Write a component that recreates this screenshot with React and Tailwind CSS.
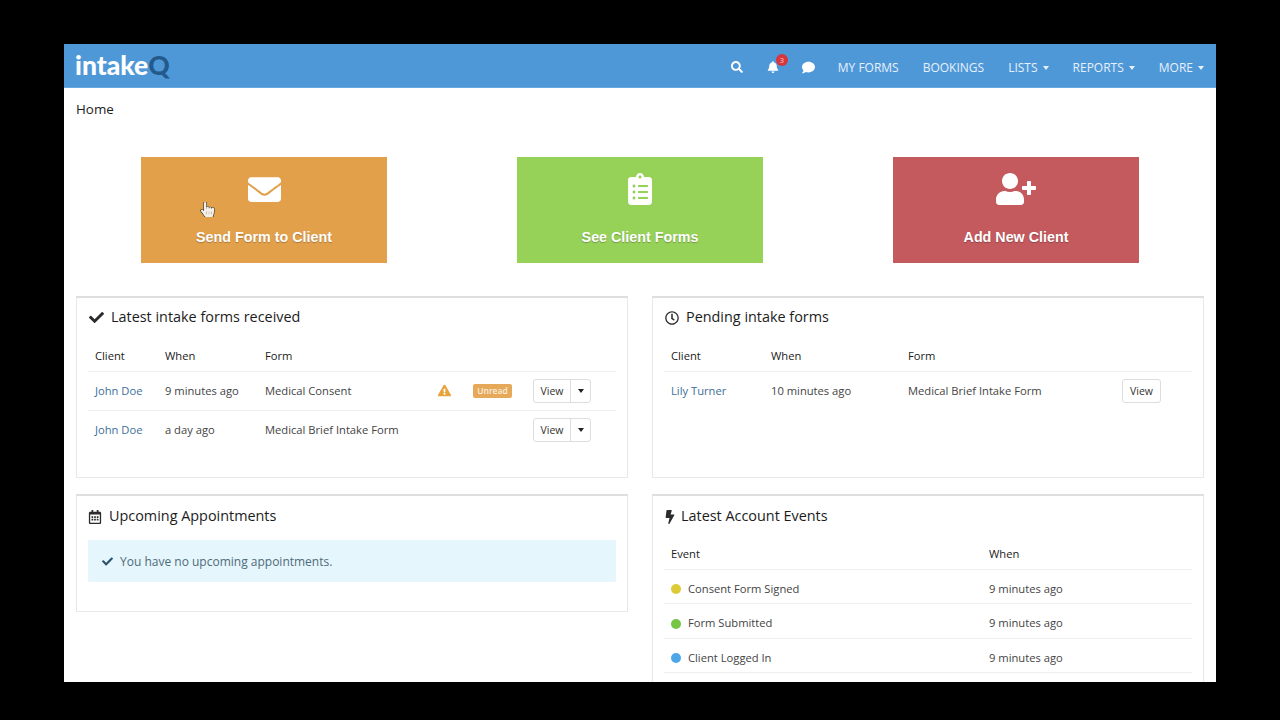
import React from "react";
import {
  FaSearch,
  FaBell,
  FaComment,
  FaEnvelope,
  FaClipboardList,
  FaUserPlus,
  FaCheck,
  FaRegClock,
  FaRegCalendarAlt,
  FaBolt,
  FaExclamationTriangle,
  FaHandPointer,
} from "react-icons/fa";

const Caret = ({ className = "" }) => (
  <span
    className={`inline-block w-0 h-0 border-x-[3.5px] border-x-transparent border-t-[4px] ${className}`}
  />
);

const NavLink = ({ label, caret }) => (
  <span className="flex items-center gap-[5px] pt-px text-[12px] text-[#e6f0fa]">
    {label}
    {caret && <Caret className="border-t-[#e6f0fa]" />}
  </span>
);

const HeroCard = ({ icon, label, color }) => (
  <div
    className={`w-[246px] h-[106px] flex flex-col items-center pt-[14px] ${color}`}
  >
    <div className="h-[36px] flex items-center justify-center text-white">
      {icon}
    </div>
    <p className="mt-[20px] font-['Liberation_Sans',sans-serif] font-bold text-[14.3px] leading-[20px] text-white [text-shadow:0_1px_1px_rgba(0,0,0,0.25)]">
      {label}
    </p>
  </div>
);

const Panel = ({ icon, title, className = "", headClass = "gap-[7px]", children }) => (
  <div
    className={`w-[552px] border border-[#e8e8e8] border-t-2 border-t-[#dedede] px-[11px] ${className}`}
  >
    <div className={`flex items-center h-[41px] text-[14.4px] font-normal text-[#1c1c1c] ${headClass}`}>
      {icon}
      <h2 className="leading-none">{title}</h2>
    </div>
    {children}
  </div>
);

const ViewSplit = () => (
  <div className="flex w-[58px] h-[24px] border border-[#dddddd] rounded-[3px] text-[10.5px] text-[#333]">
    <span className="w-[37px] pt-[2px] flex items-center justify-center border-r border-[#dddddd]">
      View
    </span>
    <span className="flex-1 flex items-center justify-center">
      <Caret className="border-t-[#222]" />
    </span>
  </div>
);

const HeadCell = ({ className = "", children }) => (
  <th className={`px-[7px] pt-[4px] text-left font-normal text-[11.2px] text-[#1c1c1c] ${className}`}>
    {children}
  </th>
);

const Cell = ({ className = "", color = "text-[#444]", children }) => (
  <td className={`px-[7px] pt-[2px] text-[11.2px] ${color} ${className}`}>{children}</td>
);

const events = [
  { name: "Consent Form Signed", dot: "bg-[#dccb36]" },
  { name: "Form Submitted", dot: "bg-[#77c545]" },
  { name: "Client Logged In", dot: "bg-[#4ea6e8]" },
];

const App = () => {
  return (
    <div className="w-[1280px] h-[720px] bg-black pt-[44px] overflow-hidden font-['Open_Sans',sans-serif]">
      <div className="relative mx-auto w-[1152px] h-[638px] bg-white overflow-hidden">
        {/* Top nav */}
        <nav className="h-[44px] bg-[#4f98d8] border-b border-[#6aa9e0] flex items-center pl-[12px] pr-[12px]">
          <div className="-ml-px font-['Lato',sans-serif] font-black text-[26.5px] leading-none text-white">
            intake<span className="text-[#24598c]">Q</span>
          </div>
          <div className="ml-auto pt-[3px] flex items-center">
            <FaSearch className="text-white text-[12px]" />
            <span className="relative ml-[24px] text-white">
              <FaBell className="text-[12px]" />
              <span className="absolute -top-[7px] left-[9px] w-[12px] h-[12px] rounded-full bg-[#d8343c] text-[8px] leading-[12px] text-center text-[#f6c9c9]">
                3
              </span>
            </span>
            <FaComment className="ml-[23px] text-white text-[13px]" />
            <div className="ml-[23px] flex items-center gap-[24px]">
              <NavLink label="MY FORMS" />
              <NavLink label="BOOKINGS" />
              <NavLink label="LISTS" caret />
              <NavLink label="REPORTS" caret />
              <NavLink label="MORE" caret />
            </div>
          </div>
        </nav>

        <div className="px-[12px]">
          <h1 className="mt-[11px] text-[13.4px] leading-[20px] text-[#1c1c1c]">Home</h1>

          {/* Action cards */}
          <div className="mt-[38px] pl-[65px] flex gap-[130px]">
            <HeroCard
              color="bg-[#e3a04a]"
              label="Send Form to Client"
              icon={<FaEnvelope className="text-[33px]" />}
            />
            <HeroCard
              color="bg-[#96d158]"
              label="See Client Forms"
              icon={<FaClipboardList className="text-[32px]" />}
            />
            <HeroCard
              color="bg-[#c4595e]"
              label="Add New Client"
              icon={<FaUserPlus className="text-[40px]" />}
            />
          </div>

          <div className="mt-[33px] grid grid-cols-[552px_552px] gap-x-[24px] gap-y-[16px]">
            <Panel
              title="Latest intake forms received"
              className="h-[182px]"
              headClass="gap-[7px] pb-[2px]"
              icon={<FaCheck className="text-[15px] text-[#2b2b2b] ml-[1px]" />}
            >
              <table className="w-[528px] table-fixed">
                <thead>
                  <tr className="h-[32px] border-b border-[#eeeeee]">
                    <HeadCell className="w-[70px]">Client</HeadCell>
                    <HeadCell className="w-[100px]">When</HeadCell>
                    <HeadCell>Form</HeadCell>
                    <HeadCell className="w-[35px]" />
                    <HeadCell className="w-[60px]" />
                    <HeadCell className="w-[90px]" />
                  </tr>
                </thead>
                <tbody>
                  <tr className="h-[39px] border-b border-[#eeeeee]">
                    <Cell color="text-[#3d6f99]">John Doe</Cell>
                    <Cell>9 minutes ago</Cell>
                    <Cell>Medical Consent</Cell>
                    <Cell className="!pt-0">
                      <FaExclamationTriangle className="text-[13px] text-[#e7a33c]" />
                    </Cell>
                    <Cell className="!pt-0">
                      <span className="block w-[39px] h-[14px] rounded-[2px] bg-[#e6a95a] text-[8.5px] leading-[14px] text-center text-[#fbeedd] font-semibold">
                        Unread
                      </span>
                    </Cell>
                    <Cell className="!pt-0">
                      <ViewSplit />
                    </Cell>
                  </tr>
                  <tr className="h-[39px]">
                    <Cell color="text-[#3d6f99]">John Doe</Cell>
                    <Cell>a day ago</Cell>
                    <Cell className="whitespace-nowrap">Medical Brief Intake Form</Cell>
                    <Cell />
                    <Cell />
                    <Cell className="!pt-0">
                      <ViewSplit />
                    </Cell>
                  </tr>
                </tbody>
              </table>
            </Panel>

            <Panel
              title="Pending intake forms"
              className="h-[182px]"
              headClass="gap-[7px] pb-[2px]"
              icon={<FaRegClock className="text-[14px] text-[#2b2b2b] ml-[1px]" />}
            >
              <table className="w-[528px] table-fixed">
                <thead>
                  <tr className="h-[32px] border-b border-[#eeeeee]">
                    <HeadCell className="w-[100px]">Client</HeadCell>
                    <HeadCell className="w-[137px]">When</HeadCell>
                    <HeadCell>Form</HeadCell>
                    <HeadCell className="w-[70px]" />
                  </tr>
                </thead>
                <tbody>
                  <tr className="h-[39px]">
                    <Cell color="text-[#3d6f99]">Lily Turner</Cell>
                    <Cell>10 minutes ago</Cell>
                    <Cell className="whitespace-nowrap">Medical Brief Intake Form</Cell>
                    <Cell className="!px-0 !pt-0">
                      <span className="block w-[39px] h-[24px] border border-[#dddddd] rounded-[3px] text-[10.5px] leading-[23px] text-center text-[#333]">
                        View
                      </span>
                    </Cell>
                  </tr>
                </tbody>
              </table>
            </Panel>

            <Panel
              title="Upcoming Appointments"
              className="h-[118px]"
              icon={<FaRegCalendarAlt className="text-[14px] text-[#2b2b2b]" />}
            >
              <div className="mt-[3px] h-[42px] pt-px rounded-[2px] bg-[#e5f6fc] flex items-center gap-[7px] pl-[14px] text-[12px] text-[#4f6b7a]">
                <FaCheck className="text-[11px] text-[#2c5470]" />
                You have no upcoming appointments.
              </div>
            </Panel>

            <Panel
              title="Latest Account Events"
              className="h-[200px]"
              headClass="gap-[4px]"
              icon={<FaBolt className="text-[14px] text-[#2b2b2b] -ml-[1px]" />}
            >
              <table className="w-[528px] table-fixed">
                <thead>
                  <tr className="h-[32px] border-b border-[#eeeeee]">
                    <HeadCell>Event</HeadCell>
                    <HeadCell className="w-[210px]">When</HeadCell>
                  </tr>
                </thead>
                <tbody>
                  {events.map((event) => (
                    <tr key={event.name} className="h-[34.5px] border-b border-[#eeeeee]">
                      <Cell className="!pt-[6px]">
                        <span className="flex items-center gap-[7px]">
                          <span className={`w-[10px] h-[10px] rounded-full ${event.dot}`} />
                          {event.name}
                        </span>
                      </Cell>
                      <Cell className="!pt-[6px]">9 minutes ago</Cell>
                    </tr>
                  ))}
                </tbody>
              </table>
            </Panel>
          </div>
        </div>

        {/* Mouse pointer captured in the recording */}
        <FaHandPointer className="absolute left-[136px] top-[158px] text-[15px] text-[#f4f0e8] stroke-[#222] stroke-[36px] [paint-order:stroke]" />
      </div>
    </div>
  );
};

export default App;
